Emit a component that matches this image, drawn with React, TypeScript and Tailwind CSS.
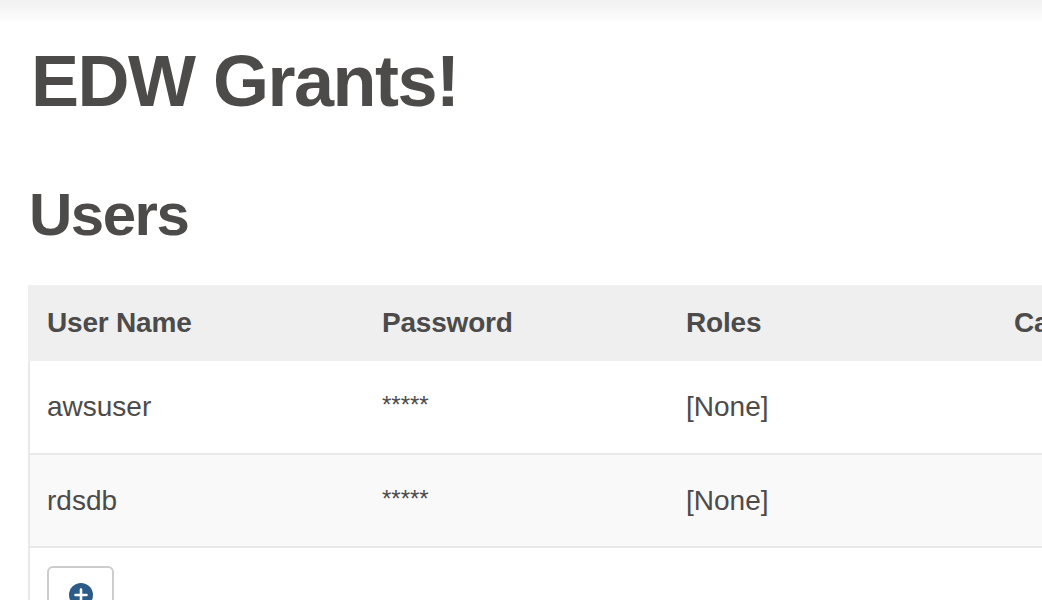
const USERS = [
  { name: 'awsuser', password: '*****', roles: '[None]' },
  { name: 'rdsdb', password: '*****', roles: '[None]' },
]

const COLUMNS = ['User Name', 'Password', 'Roles', 'Can Login']

function PlusCircleIcon() {
  return (
    <svg
      width="24"
      height="24"
      viewBox="0 0 24 24"
    >
      <circle
        cx="12"
        cy="12"
        r="12"
        fill="#2d5b88"
      />
      <path
        d="M12 6.5v11M6.5 12h11"
        stroke="#fff"
        strokeWidth="2.6"
        strokeLinecap="round"
      />
    </svg>
  )
}

function UsersTable() {
  return (
    <table className="w-[1300px] table-fixed border-collapse text-[28px] leading-[40px]">
      <colgroup>
        <col className="w-[336px]" />
        <col className="w-[304px]" />
        <col className="w-[328px]" />
        <col />
      </colgroup>
      <thead>
        <tr className="bg-[#efefef]">
          {COLUMNS.map((col) => (
            <th
              key={col}
              className="h-[76px] px-[17px] text-left font-bold tracking-[-0.2px] first:border-l-2 first:border-[#efefef]"
            >
              {col}
            </th>
          ))}
        </tr>
      </thead>
      <tbody>
        {USERS.map((user, i) => (
          <tr
            key={user.name}
            className={i % 2 === 1 ? 'bg-[#f9f9f9]' : 'bg-white'}
          >
            <td className="h-[93px] border-b-2 border-l-2 border-[#e9e9e9] px-[17px]">{user.name}</td>
            <td className="h-[93px] border-b-2 border-[#e9e9e9] px-[17px] pt-[24px] align-top text-[24px]">{user.password}</td>
            <td className="h-[93px] border-b-2 border-[#e9e9e9] px-[17px]">{user.roles}</td>
            <td className="h-[93px] border-b-2 border-[#e9e9e9] px-[17px]" />
          </tr>
        ))}
        <tr>
          <td
            colSpan={4}
            className="border-l-2 border-[#e9e9e9] px-[17px] pt-[18px] pb-4"
          >
            <button className="flex h-[62px] w-[67px] items-start justify-center rounded-md border-2 border-[#cccccc] bg-white pt-[15px]">
              <PlusCircleIcon />
            </button>
          </td>
        </tr>
      </tbody>
    </table>
  )
}

export default function App() {
  return (
    <div className="h-[600px] w-[1042px] overflow-hidden bg-white font-['Liberation_Sans',Arial,sans-serif] text-[#4d4b4a]">
      <div className="h-6 bg-gradient-to-b from-[#f1f1f1] to-white" />
      <div className="pl-[28px]">
        <h1 className="mt-[17px] pl-[3px] text-[72px] leading-[80px] font-bold tracking-[-1.5px]">EDW Grants!</h1>
        <h2 className="mt-[61px] pl-[1px] text-[60px] leading-[66px] font-bold tracking-[-1.5px]">Users</h2>
        <div className="mt-[37px]">
          <UsersTable />
        </div>
      </div>
    </div>
  )
}
